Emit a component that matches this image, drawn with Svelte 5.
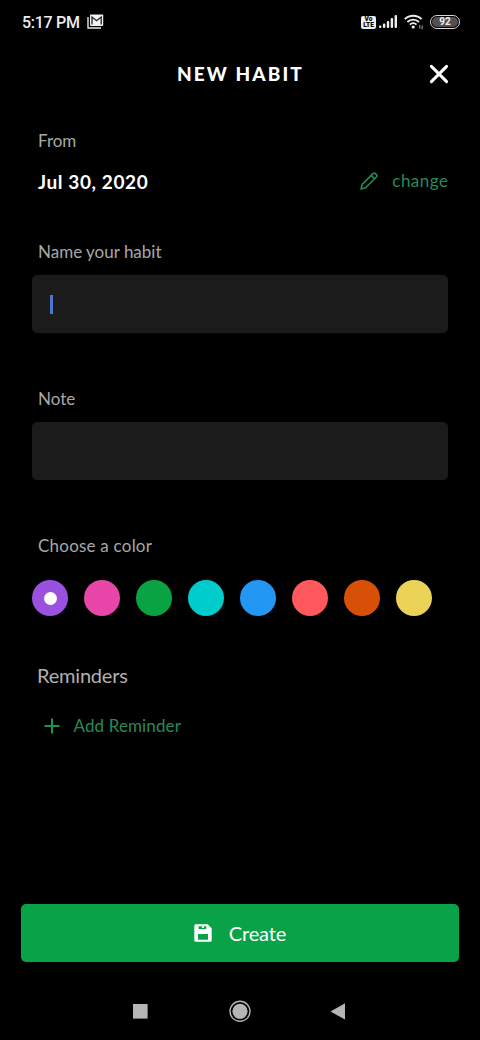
<script>
  const colors = [
    '#9b51e0', '#e847a9', '#0aa344', '#00cccc',
    '#2196f3', '#ff595e', '#d84f08', '#ebd357'
  ];

  let selected = $state(colors[0]);
  let name = $state('');
  let note = $state('');
</script>

<main class="screen">
  <div class="status-bar">
    <div class="status-left">
      <span class="time">5:17 PM</span>
      <svg width="17" height="15" viewBox="0 0 17 15">
        <path d="M1 3v11h13" fill="none" stroke="#e8e8e8" stroke-width="1.4" />
        <rect x="3" y="0.5" width="13.2" height="11.4" rx="0.8" fill="#f2f2f2" />
        <path d="M5 10.6V3l4.6 3.7L14.2 3v7.6" fill="none" stroke="#222" stroke-width="1.3" />
      </svg>
    </div>
    <div class="status-right">
      <span class="volte"><b>Vo</b><b>LTE</b></span>
      <svg class="signal" width="19" height="14" viewBox="0 0 19 14" fill="#ededed">
        <rect x="0" y="10.5" width="2.4" height="2.5" rx="1" />
        <rect x="3.9" y="8.5" width="2.4" height="4.5" rx="1" />
        <rect x="7.8" y="6" width="2.4" height="7" rx="1" />
        <rect x="11.7" y="3" width="2.4" height="10" rx="1" />
        <rect x="15.6" y="0" width="2.4" height="13" rx="1" />
      </svg>
      <svg class="wifi" width="20" height="16" viewBox="0 0 20 16">
        <g fill="none" stroke="#ededed" stroke-width="1.8">
          <path d="M0.8 5.2a12 12 0 0 1 16.8 0" />
          <path d="M3.4 8a8.2 8.2 0 0 1 11.6 0" />
          <path d="M5.9 10.6a4.6 4.6 0 0 1 6.6 0" />
        </g>
        <circle cx="9.2" cy="13" r="1.6" fill="#ededed" />
        <path d="M15.8 11v3.6M18.2 11.6v3.6" stroke="#aaa" stroke-width="1" />
      </svg>
      <span class="battery"><span>92</span></span>
    </div>
  </div>

  <header>
    <h1>NEW HABIT</h1>
    <button class="close" aria-label="Close">
      <svg width="20" height="20" viewBox="0 0 20 20">
        <path d="M2.4 2.4l15.2 15.2M17.6 2.4L2.4 17.6" stroke="#fff" stroke-width="3" stroke-linecap="round" />
      </svg>
    </button>
  </header>

  <section class="form">
    <div class="label from">From</div>
    <div class="date-row">
      <span class="date">Jul 30, 2020</span>
      <button class="link">
        <svg width="20" height="20" viewBox="0 0 20 20" fill="none" stroke="#27895a" stroke-width="1.6" stroke-linejoin="round">
          <path d="M2 18l1.2-4.6L14 2.6a1.7 1.7 0 0 1 2.4 0l1 1a1.7 1.7 0 0 1 0 2.4L6.6 16.8z" />
          <path d="M12.2 4.4l3.4 3.4" />
        </svg>
        <span class="change">change</span>
      </button>
    </div>

    <label class="label" for="name">Name your habit</label>
    <div class="field">
      {#if !name}<i class="caret"></i>{/if}
      <input id="name" bind:value={name} />
    </div>

    <label class="label" for="note">Note</label>
    <div class="field">
      <input id="note" bind:value={note} />
    </div>

    <div class="label color-label">Choose a color</div>
    <div class="colors">
      {#each colors as color}
        <button
          class="swatch"
          class:selected={selected === color}
          style="background: {color}"
          aria-label={color}
          onclick={() => (selected = color)}
        ></button>
      {/each}
    </div>

    <h2>Reminders</h2>
    <button class="link add">
      <svg width="16" height="16" viewBox="0 0 16 16">
        <path d="M8 0.5v15M0.5 8h15" stroke="#1c9552" stroke-width="2" />
      </svg>
      <span>Add Reminder</span>
    </button>
  </section>

  <footer>
    <button class="create">
      <svg width="18" height="18" viewBox="0 0 18 18">
        <path
          fill="#fff"
          fill-rule="evenodd"
          d="M1.8 0.3H13.6L17.7 4.2V16.2a1.5 1.5 0 0 1-1.5 1.5H1.8A1.5 1.5 0 0 1 .3 16.2V1.8A1.5 1.5 0 0 1 1.8.3zM4.6 2.2V5h7.7V2.2H10V4H8V2.2zM4 10v5.8h10V10z"
        />
      </svg>
      <span>Create</span>
    </button>
  </footer>

  <nav>
    <svg width="22" height="22" viewBox="0 0 22 22"><rect x="4" y="4" width="14.6" height="14.6" fill="#b5b5b5" /></svg>
    <svg width="22" height="22" viewBox="0 0 22 22">
      <circle cx="11" cy="11.3" r="10" fill="none" stroke="#b5b5b5" stroke-width="1.4" />
      <circle cx="11" cy="11.3" r="7.6" fill="#b5b5b5" />
    </svg>
    <svg width="22" height="22" viewBox="0 0 22 22"><path d="M1.5 11.4L16 3.2v16.4z" fill="#b5b5b5" /></svg>
  </nav>
</main>

<style>
  :global(body) {
    background: #000;
  }

  .screen {
    box-sizing: border-box;
    width: 480px;
    height: 1040px;
    display: flex;
    flex-direction: column;
    background: #000;
    color: #fff;
    font-family: Lato, 'Open Sans', sans-serif;
    overflow: hidden;
  }

  button {
    border: 0;
    padding: 0;
    background: none;
    color: inherit;
    font: inherit;
    cursor: pointer;
  }

  svg {
    display: block;
    flex-shrink: 0;
  }

  /* status bar */
  .status-bar {
    height: 44px;
    padding: 0 20px 0 22px;
    display: flex;
    align-items: center;
    justify-content: space-between;
    font-family: Roboto, sans-serif;
    color: #ededed;
  }

  .status-left,
  .status-right {
    display: flex;
    align-items: center;
  }

  .status-left {
    gap: 7px;
  }

  .status-left svg {
    margin-top: -2px;
  }

  .time {
    font-size: 16px;
    font-weight: 500;
    letter-spacing: -0.3px;
  }

  .volte {
    width: 15px;
    height: 13px;
    display: flex;
    flex-direction: column;
    justify-content: center;
    background: #ededed;
    border-radius: 2px;
    color: #000;
    text-align: center;
    font-size: 6.5px;
    line-height: 6px;
  }

  .volte b {
    font-weight: 900;
  }

  .signal {
    margin-left: 3px;
  }

  .wifi {
    margin-left: 6px;
  }

  .battery {
    box-sizing: border-box;
    width: 30px;
    height: 14px;
    margin-left: 6px;
    padding: 1px;
    border: 1px solid #d8d8d8;
    border-radius: 7px;
  }

  .battery span {
    display: block;
    height: 10px;
    border-radius: 5px;
    background: #505050;
    text-align: center;
    font-size: 10px;
    font-weight: 700;
    line-height: 10px;
  }

  /* header */
  header {
    height: 60px;
    display: grid;
    grid-template-columns: 80px 1fr 82px;
    align-items: center;
  }

  h1 {
    grid-column: 2;
    margin: 0 0 1px 3px;
    text-align: center;
    font-size: 19px;
    font-weight: 900;
    letter-spacing: 2.1px;
  }

  .close {
    justify-self: center;
  }

  /* form */
  .form {
    padding: 25px 32px 0;
    flex: 1;
  }

  .label {
    display: block;
    padding-left: 6px;
    line-height: 24px;
    font-size: 17px;
    color: #a8a8a8;
  }

  .color-label {
    letter-spacing: 0.22px;
  }

  .date-row {
    display: flex;
    align-items: center;
    justify-content: space-between;
    height: 24px;
    margin: 16px 0 47px;
    padding-left: 6px;
  }

  .date {
    font-size: 19px;
    font-weight: 700;
    letter-spacing: 0.6px;
  }

  .link {
    display: flex;
    align-items: center;
    gap: 13px;
    font-size: 17px;
    line-height: 24px;
    color: #27895a;
  }

  .change {
    letter-spacing: 0.5px;
    margin-right: -0.5px;
  }

  .field {
    box-sizing: border-box;
    display: flex;
    align-items: center;
    height: 58px;
    margin: 11px 0 54px;
    padding: 0 18px;
    background: #1b1b1b;
    border-radius: 5px;
  }

  .caret {
    width: 3px;
    height: 19px;
    background: #4a76d0;
  }

  input {
    flex: 1;
    min-width: 0;
    border: 0;
    outline: 0;
    background: none;
    color: #fff;
    font: inherit;
    font-size: 17px;
  }

  .colors {
    display: flex;
    gap: 16px;
    margin-top: 22px;
  }

  .swatch {
    width: 36px;
    height: 36px;
    display: grid;
    place-items: center;
    border-radius: 50%;
  }

  .selected::after {
    content: '';
    width: 13px;
    height: 13px;
    border-radius: 50%;
    background: #fff;
  }

  h2 {
    margin: 47px 0 27px;
    padding-left: 5px;
    line-height: 24px;
    font-size: 20px;
    font-weight: 400;
    letter-spacing: -0.2px;
    color: #b0b0b0;
  }

  .add {
    padding-left: 11.5px;
    gap: 14px;
    letter-spacing: 0.12px;
  }

  /* bottom */
  footer {
    padding: 0 21px;
  }

  .create {
    width: 100%;
    height: 58px;
    display: flex;
    align-items: center;
    justify-content: center;
    gap: 17px;
    border-radius: 5px;
    background: #09a247;
    font-size: 20px;
    letter-spacing: -0.1px;
  }

  nav {
    height: 78px;
    box-sizing: border-box;
    padding: 38px 129px 0;
    display: flex;
    justify-content: space-between;
  }
</style>
